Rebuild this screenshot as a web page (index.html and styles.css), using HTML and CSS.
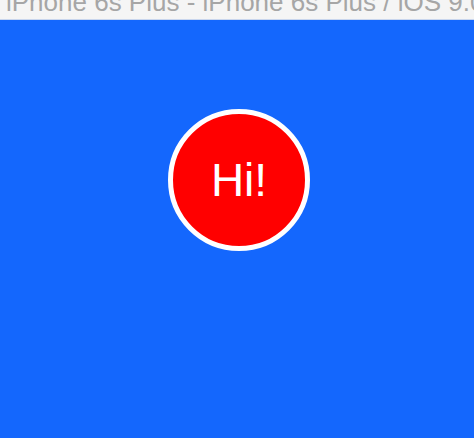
FILE: index.html
```html
<!DOCTYPE html>
<html>
<head>
<meta charset="utf-8">
<link rel="stylesheet" href="styles.css">
</head>
<body>
<div class="titlebar"><div class="title">iPhone 6s Plus - iPhone 6s Plus / iOS 9.0</div></div>
<div class="screen">
  <div class="bubble">Hi!</div>
</div>
</body>
</html>
```
FILE: styles.css
```css
html, body {
  margin: 0;
  padding: 0;
  width: 474px;
  height: 438px;
  overflow: hidden;
  background: #1467fd;
}
.titlebar {
  height: 19px;
  background: #f5f5f5;
  border-bottom: 1px solid #c9d6ee;
  overflow: hidden;
}
.title {
  font-family: "Liberation Sans", Arial, sans-serif;
  font-size: 26px;
  line-height: 26px;
  color: #a6a6a6;
  white-space: nowrap;
  margin-top: -11px;
  padding-left: 6px;
}
.screen {
  padding-top: 89px;
  padding-left: 168px;
}
.bubble {
  width: 142px;
  height: 142px;
  box-sizing: border-box;
  border: 5px solid #ffffff;
  border-radius: 50%;
  background: #ff0000;
  color: #ffffff;
  font-family: "Liberation Sans", Arial, sans-serif;
  font-size: 46px;
  display: flex;
  align-items: center;
  justify-content: center;
}
```
